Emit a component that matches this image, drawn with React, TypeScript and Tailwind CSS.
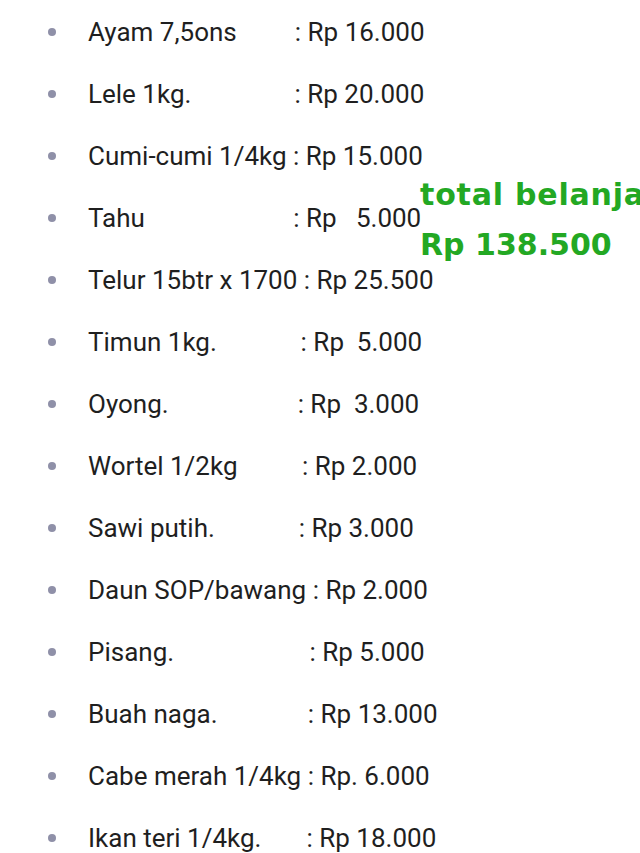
import React from "react";

const rows: string[] = [
  "Ayam 7,5ons         : Rp 16.000",
  "Lele 1kg.                : Rp 20.000",
  "Cumi-cumi 1/4kg : Rp 15.000",
  "Tahu                       : Rp   5.000",
  "Telur 15btr x 1700 : Rp 25.500",
  "Timun 1kg.             : Rp  5.000",
  "Oyong.                    : Rp  3.000",
  "Wortel 1/2kg          : Rp 2.000",
  "Sawi putih.             : Rp 3.000",
  "Daun SOP/bawang : Rp 2.000",
  "Pisang.                     : Rp 5.000",
  "Buah naga.              : Rp 13.000",
  "Cabe merah 1/4kg : Rp. 6.000",
  "Ikan teri 1/4kg.       : Rp 18.000",
];

export default function App() {
  return (
    <div
      className="relative w-[640px] h-[853px] overflow-hidden bg-white"
      style={{ fontFamily: "Roboto, 'Noto Sans', sans-serif" }}
    >
      <ul className="pt-[1px]">
        {rows.map((r, i) => (
          <li key={i} className="flex h-[62px] items-center">
            <span className="ml-[48px] h-[8px] w-[8px] rounded-full bg-[#8f90a8]" />
            <span className="ml-[32px] whitespace-pre text-[26px] text-[#1f1f1f]">{r}</span>
          </li>
        ))}
      </ul>
      <div
        className="absolute left-[420px] top-[170px] whitespace-nowrap text-[30px] font-bold leading-[50px] text-[#23a823]"
        style={{ fontFamily: "'DejaVu Sans', sans-serif" }}
      >
        <div className="tracking-[0.8px]">total belanja</div>
        <div>Rp 138.500</div>
      </div>
    </div>
  );
}
